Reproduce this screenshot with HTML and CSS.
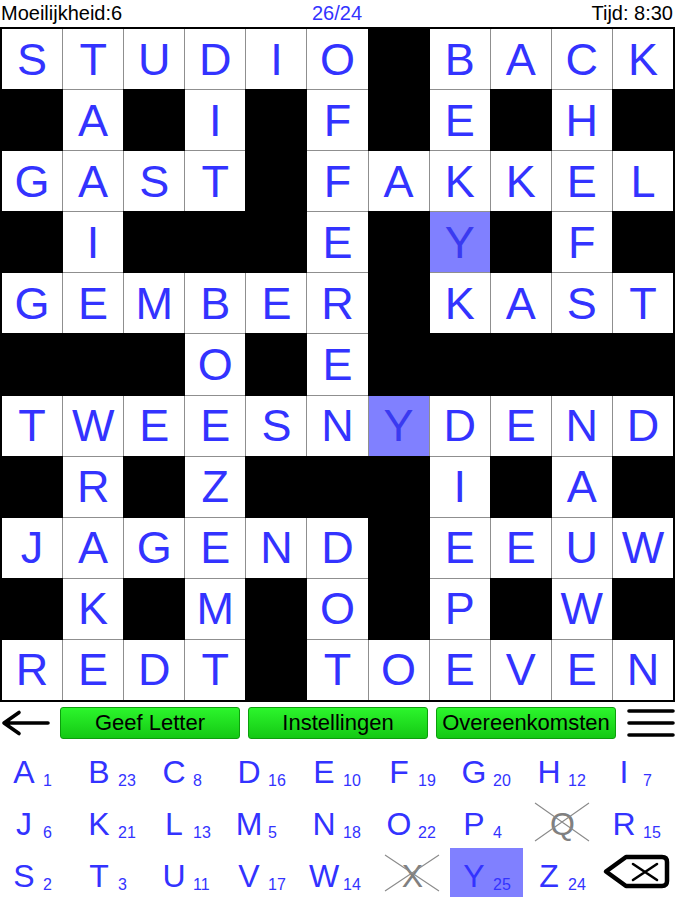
FILE: index.html
```html
<!DOCTYPE html>
<html>
<head>
<meta charset="utf-8">
<link rel="stylesheet" href="styles.css">
</head>
<body>
<div class="app">
  <div class="topbar">
    <span class="level">Moeilijkheid:6</span>
    <span class="count">26/24</span>
    <span class="time">Tijd: 8:30</span>
  </div>

  <div class="board">
    <div class="c">S</div><div class="c">T</div><div class="c">U</div><div class="c">D</div><div class="c">I</div><div class="c">O</div><div class="c b"></div><div class="c">B</div><div class="c">A</div><div class="c">C</div><div class="c">K</div>
    <div class="c b"></div><div class="c">A</div><div class="c b"></div><div class="c">I</div><div class="c b"></div><div class="c">F</div><div class="c b"></div><div class="c">E</div><div class="c b"></div><div class="c">H</div><div class="c b"></div>
    <div class="c">G</div><div class="c">A</div><div class="c">S</div><div class="c">T</div><div class="c b"></div><div class="c">F</div><div class="c">A</div><div class="c">K</div><div class="c">K</div><div class="c">E</div><div class="c">L</div>
    <div class="c b"></div><div class="c">I</div><div class="c b"></div><div class="c b"></div><div class="c b"></div><div class="c">E</div><div class="c b"></div><div class="c h">Y</div><div class="c b"></div><div class="c">F</div><div class="c b"></div>
    <div class="c">G</div><div class="c">E</div><div class="c">M</div><div class="c">B</div><div class="c">E</div><div class="c">R</div><div class="c b"></div><div class="c">K</div><div class="c">A</div><div class="c">S</div><div class="c">T</div>
    <div class="c b"></div><div class="c b"></div><div class="c b"></div><div class="c">O</div><div class="c b"></div><div class="c">E</div><div class="c b"></div><div class="c b"></div><div class="c b"></div><div class="c b"></div><div class="c b"></div>
    <div class="c">T</div><div class="c">W</div><div class="c">E</div><div class="c">E</div><div class="c">S</div><div class="c">N</div><div class="c h">Y</div><div class="c">D</div><div class="c">E</div><div class="c">N</div><div class="c">D</div>
    <div class="c b"></div><div class="c">R</div><div class="c b"></div><div class="c">Z</div><div class="c b"></div><div class="c b"></div><div class="c b"></div><div class="c">I</div><div class="c b"></div><div class="c">A</div><div class="c b"></div>
    <div class="c">J</div><div class="c">A</div><div class="c">G</div><div class="c">E</div><div class="c">N</div><div class="c">D</div><div class="c b"></div><div class="c">E</div><div class="c">E</div><div class="c">U</div><div class="c">W</div>
    <div class="c b"></div><div class="c">K</div><div class="c b"></div><div class="c">M</div><div class="c b"></div><div class="c">O</div><div class="c b"></div><div class="c">P</div><div class="c b"></div><div class="c">W</div><div class="c b"></div>
    <div class="c">R</div><div class="c">E</div><div class="c">D</div><div class="c">T</div><div class="c b"></div><div class="c">T</div><div class="c">O</div><div class="c">E</div><div class="c">V</div><div class="c">E</div><div class="c">N</div>
  </div>

  <div class="controls">
    <div class="back">
      <svg width="54" height="30" viewBox="0 0 54 30">
        <path d="M4 15 H48 M4 15 L19 4.5 M4 15 L19 25.5" stroke="#000" stroke-width="3.6" fill="none" stroke-linecap="round" stroke-linejoin="round"/>
      </svg>
    </div>
    <button class="btn">Geef Letter</button>
    <button class="btn">Instellingen</button>
    <button class="btn">Overeenkomsten</button>
    <div class="menu">
      <svg width="48" height="32" viewBox="0 0 48 32">
        <path d="M2 4 H46 M2 16 H46 M2 28 H46" stroke="#000" stroke-width="3.6" stroke-linecap="round"/>
      </svg>
    </div>
  </div>

  <div class="keyboard">
    <div class="key"><span class="l">A</span><span class="n">1</span></div>
    <div class="key"><span class="l">B</span><span class="n">23</span></div>
    <div class="key"><span class="l">C</span><span class="n">8</span></div>
    <div class="key"><span class="l">D</span><span class="n">16</span></div>
    <div class="key"><span class="l">E</span><span class="n">10</span></div>
    <div class="key"><span class="l">F</span><span class="n">19</span></div>
    <div class="key"><span class="l">G</span><span class="n">20</span></div>
    <div class="key"><span class="l">H</span><span class="n">12</span></div>
    <div class="key"><span class="l">I</span><span class="n">7</span></div>

    <div class="key"><span class="l">J</span><span class="n">6</span></div>
    <div class="key"><span class="l">K</span><span class="n">21</span></div>
    <div class="key"><span class="l">L</span><span class="n">13</span></div>
    <div class="key"><span class="l">M</span><span class="n">5</span></div>
    <div class="key"><span class="l">N</span><span class="n">18</span></div>
    <div class="key"><span class="l">O</span><span class="n">22</span></div>
    <div class="key"><span class="l">P</span><span class="n">4</span></div>
    <div class="key used"><span class="g">Q</span>
      <svg class="cross" width="56" height="40" viewBox="0 0 56 40"><path d="M1 1 L55 39 M1 39 L55 1" stroke="#8a8a8a" stroke-width="1.1"/></svg>
    </div>
    <div class="key"><span class="l">R</span><span class="n">15</span></div>

    <div class="key"><span class="l">S</span><span class="n">2</span></div>
    <div class="key"><span class="l">T</span><span class="n">3</span></div>
    <div class="key"><span class="l">U</span><span class="n">11</span></div>
    <div class="key"><span class="l">V</span><span class="n">17</span></div>
    <div class="key"><span class="l">W</span><span class="n">14</span></div>
    <div class="key used"><span class="g">X</span>
      <svg class="cross" width="56" height="38" viewBox="0 0 56 38"><path d="M1 1 L55 37 M1 37 L55 1" stroke="#8a8a8a" stroke-width="1.1"/></svg>
    </div>
    <div class="key sel"><span class="l">Y</span><span class="n">25</span></div>
    <div class="key"><span class="l">Z</span><span class="n">24</span></div>
    <div class="key del">
      <svg width="70" height="36" viewBox="0 0 70 36">
        <path d="M4 17.5 L24 3 H60 Q65 3 65 8 V27 Q65 32 60 32 H24 Z" stroke="#000" stroke-width="4.5" fill="none" stroke-linejoin="round"/>
        <path d="M31 10 L55 26 M31 26 L55 10" stroke="#000" stroke-width="2.6" stroke-linecap="round"/>
      </svg>
    </div>
  </div>
</div>
</body>
</html>
```
FILE: styles.css
```css
* { box-sizing: border-box; }
html, body {
  margin: 0;
  padding: 0;
  background: #fff;
}
body {
  font-family: "Liberation Sans", Arial, sans-serif;
}
.app {
  width: 675px;
  height: 900px;
  overflow: hidden;
}
.topbar {
  height: 27px;
  display: grid;
  grid-template-columns: 1fr auto 1fr;
  align-items: center;
  font-size: 20px;
  line-height: 27px;
  padding: 0 2px 0 1px;
  color: #000;
}
.topbar .count {
  color: #3333ff;
  text-align: center;
}
.topbar .time {
  text-align: right;
}
.board {
  width: 675px;
  height: 675px;
  border: 2px solid #000;
  background: #8f8f8f;
  display: grid;
  grid-template-columns: repeat(11, 1fr);
  grid-template-rows: repeat(11, 1fr);
  gap: 1px;
}
.c {
  background: #fff;
  color: #3333ff;
  font-size: 45px;
  display: flex;
  align-items: center;
  justify-content: center;
  line-height: 1;
}
.c.b {
  background: #000;
  box-shadow: 0 0 0 1px #000;
}
.c.h {
  background: #8080ff;
  color: #3a3af0;
}
.controls {
  height: 40px;
  display: flex;
  align-items: flex-start;
  padding-top: 5px;
}
.back {
  width: 60px;
  height: 32px;
  display: flex;
  align-items: center;
}
.btn {
  width: 180px;
  height: 32px;
  margin: 0 8px 0 0;
  padding: 0;
  border: 1px solid #0c9e0c;
  border-radius: 3px;
  background: linear-gradient(#2cf52c, #14c814);
  font-family: "Liberation Sans", Arial, sans-serif;
  font-size: 22px;
  line-height: 30px;
  color: #000;
  text-align: center;
}
.btn:last-of-type {
  margin-right: 0;
}
.menu {
  margin-left: 11px;
  height: 32px;
  display: flex;
  align-items: center;
}
.keyboard {
  display: grid;
  grid-template-columns: repeat(9, 75px);
  grid-template-rows: repeat(3, 52px);
}
.key {
  position: relative;
  padding-top: 8px;
  line-height: 44px;
  white-space: nowrap;
  color: #3333ff;
}
.key .l {
  display: inline-block;
  width: 38px;
  margin-left: 5px;
  text-align: center;
  font-size: 32px;
}
.key .n {
  font-size: 16px;
  line-height: 1;
  vertical-align: -3px;
}
.key.used {
  text-align: center;
}
.key .g {
  font-size: 32px;
  color: #808080;
}
.key .cross {
  position: absolute;
  left: 9px;
  top: 8px;
}
.key.sel {
  background: #8080ff;
  margin: 2px 2px 1px 0;
  padding-top: 6px;
}
.key.del {
  padding-top: 8px;
  padding-left: 2px;
  line-height: 0;
}
```
